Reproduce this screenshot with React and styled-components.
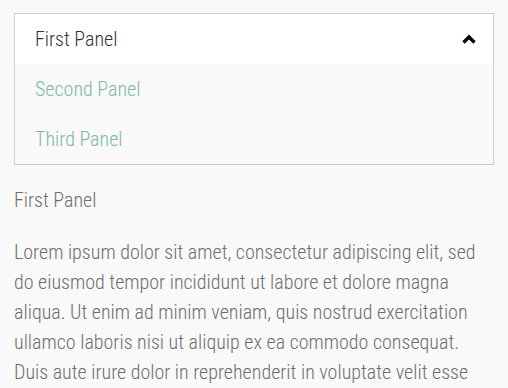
import styled, { createGlobalStyle } from "styled-components";

const GlobalStyle = createGlobalStyle`
  body {
    margin: 0;
    background-color: #f9f9f9;
    font-family: "Roboto Condensed", "Liberation Sans Narrow", Roboto, sans-serif;
    font-weight: 300;
  }
`;

const Page = styled.div`
  padding: 13px 14px;
`;

const Accordion = styled.div`
  border: 1px solid #cccccc;
  display: flex;
  flex-direction: column;
`;

const Tab = styled.div`
  height: 50px;
  display: flex;
  align-items: center;
  justify-content: space-between;
  padding: 0 16px 0 20px;
  font-size: 20px;
  color: ${(p) => (p.active ? "#333333" : "#78bca3")};
  background-color: ${(p) => (p.active ? "#ffffff" : "#f9f9f9")};
  cursor: pointer;
`;

const Content = styled.div`
  padding-top: 21px;
  color: #6e6e6e;
  font-size: 20px;
`;

const Title = styled.p`
  margin: 0 0 23px;
  line-height: 28px;
`;

const Text = styled.p`
  margin: 0;
  line-height: 30px;
`;

const Chevron = () => (
  <svg width="16" height="12" viewBox="0 0 16 12">
    <path d="M2.5 9.5 L8 4 L13.5 9.5" fill="none" stroke="#000" strokeWidth="3.4" />
  </svg>
);

const panels = ["First Panel", "Second Panel", "Third Panel"];

export default function App() {
  return (
    <Page>
      <GlobalStyle />
      <Accordion>
        {panels.map((name, i) => (
          <Tab key={name} active={i === 0}>
            {name}
            {i === 0 && <Chevron />}
          </Tab>
        ))}
      </Accordion>
      <Content>
        <Title>First Panel</Title>
        <Text>
          Lorem ipsum dolor sit amet, consectetur adipiscing elit, sed do
          eiusmod tempor incididunt ut labore et dolore magna aliqua. Ut enim ad
          minim veniam, quis nostrud exercitation ullamco laboris nisi ut
          aliquip ex ea commodo consequat. Duis aute irure dolor in
          reprehenderit in voluptate velit esse cillum dolore eu fugiat nulla
          pariatur.
        </Text>
      </Content>
    </Page>
  );
}
